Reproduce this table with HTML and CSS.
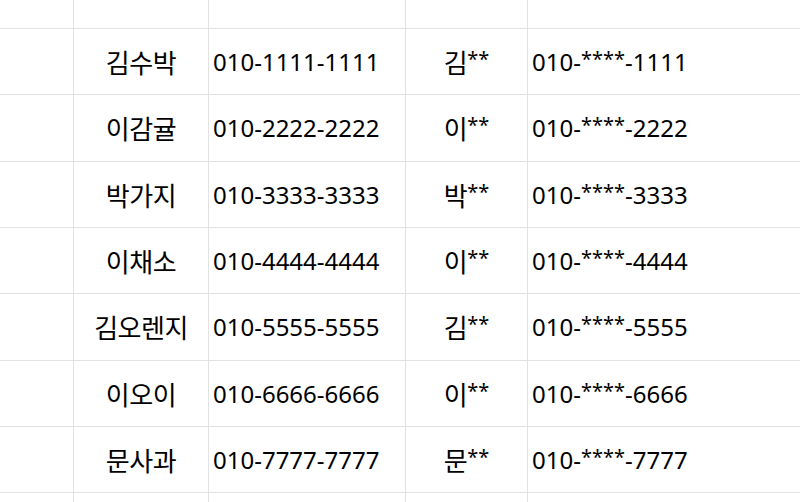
FILE: index.html
```html
<!DOCTYPE html>
<html lang="ko">
<head>
<meta charset="utf-8">
<link rel="stylesheet" href="styles.css">
</head>
<body>
<div class="sheet">
  <div class="c"></div><div class="c"></div><div class="c"></div><div class="c"></div><div class="c"></div>

  <div class="c"></div><div class="c name"><span class="ko">김수박</span></div><div class="c phone">010-1111-1111</div><div class="c name"><span class="ko">김</span><span class="ast">**</span></div><div class="c phone">010-<span class="ast">****</span>-1111</div>
  <div class="c"></div><div class="c name"><span class="ko">이감귤</span></div><div class="c phone">010-2222-2222</div><div class="c name"><span class="ko">이</span><span class="ast">**</span></div><div class="c phone">010-<span class="ast">****</span>-2222</div>
  <div class="c"></div><div class="c name"><span class="ko">박가지</span></div><div class="c phone">010-3333-3333</div><div class="c name"><span class="ko">박</span><span class="ast">**</span></div><div class="c phone">010-<span class="ast">****</span>-3333</div>
  <div class="c"></div><div class="c name"><span class="ko">이채소</span></div><div class="c phone">010-4444-4444</div><div class="c name"><span class="ko">이</span><span class="ast">**</span></div><div class="c phone">010-<span class="ast">****</span>-4444</div>
  <div class="c"></div><div class="c name"><span class="ko">김오렌지</span></div><div class="c phone">010-5555-5555</div><div class="c name"><span class="ko">김</span><span class="ast">**</span></div><div class="c phone">010-<span class="ast">****</span>-5555</div>
  <div class="c"></div><div class="c name"><span class="ko">이오이</span></div><div class="c phone">010-6666-6666</div><div class="c name"><span class="ko">이</span><span class="ast">**</span></div><div class="c phone">010-<span class="ast">****</span>-6666</div>
  <div class="c"></div><div class="c name"><span class="ko">문사과</span></div><div class="c phone">010-7777-7777</div><div class="c name"><span class="ko">문</span><span class="ast">**</span></div><div class="c phone">010-<span class="ast">****</span>-7777</div>
  <div class="c"></div><div class="c"></div><div class="c"></div><div class="c"></div><div class="c"></div>
</div>
</body>
</html>
```

FILE: styles.css
```css
html, body {
  margin: 0;
  padding: 0;
  background: #ffffff;
  overflow: hidden;
}
.sheet {
  display: grid;
  grid-template-columns: 74px 135px 197px 122px 272px;
  grid-template-rows: 29px repeat(7, 66.33px) 10px;
  width: 800px;
  height: 502px;
  overflow: hidden;
  font-family: "Noto Sans", "Noto Sans CJK KR", sans-serif;
  font-size: 24px;
  color: #000000;
}
.c {
  border-right: 1px solid #e2e2e2;
  border-bottom: 1px solid #e2e2e2;
  display: flex;
  align-items: center;
  white-space: nowrap;
  overflow: hidden;
}
.c:nth-child(5n) {
  border-right: none;
}
.name {
  justify-content: center;
}
.phone {
  padding-left: 4px;
}
.ko {
  font-family: "Noto Sans CJK KR", sans-serif;
  font-size: 26px;
  letter-spacing: -0.5px;
}
.ast {
  font-size: 20px;
  position: relative;
  top: -3px;
}
```
